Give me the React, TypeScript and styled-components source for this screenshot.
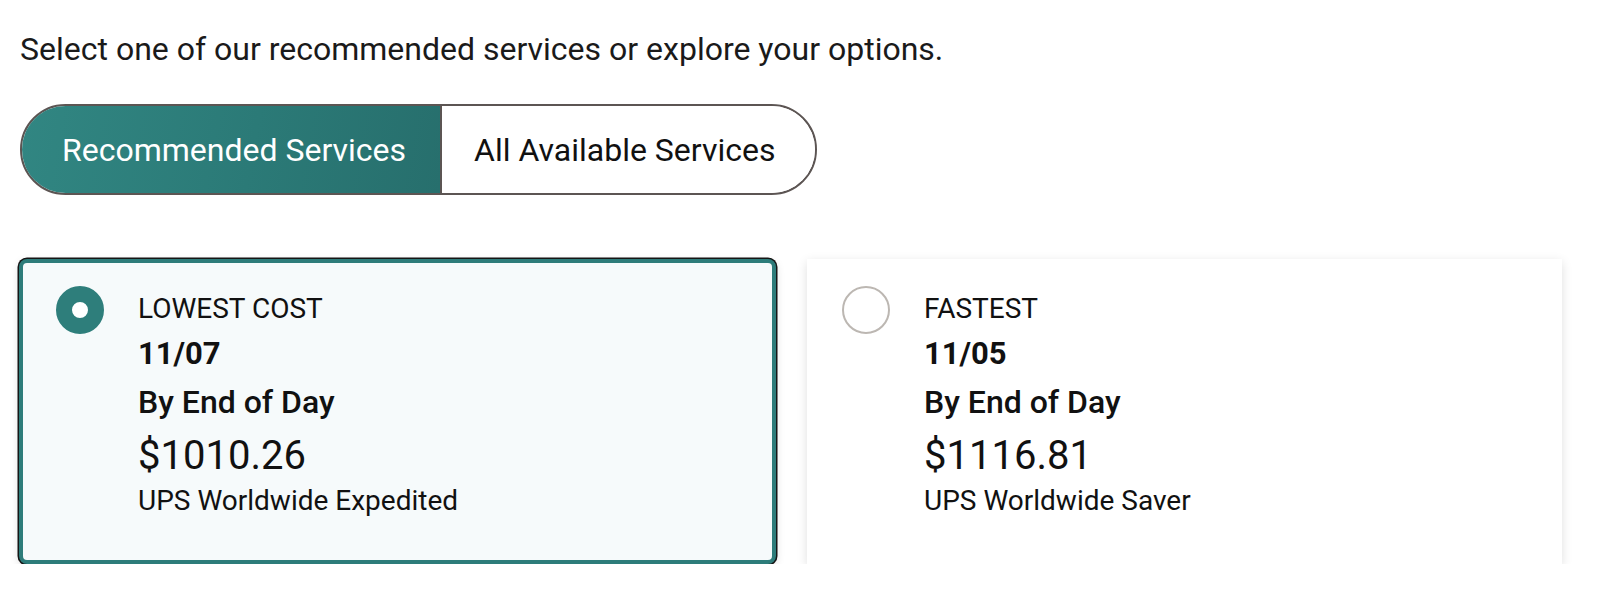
import styled, { createGlobalStyle } from 'styled-components';

const GlobalStyle = createGlobalStyle`
  body {
    margin: 0;
    background: #ffffff;
    font-family: Roboto, 'Liberation Sans', sans-serif;
    color: #111111;
  }
`;

const Page = styled.div`
  padding: 28px 0 0 20px;
`;

const Intro = styled.p`
  margin: 0;
  font-size: 32px;
  line-height: 42px;
  color: #1a1a1a;
`;

const Toggle = styled.div`
  display: inline-flex;
  margin-top: 34px;
  height: 91px;
  box-sizing: border-box;
  border: 2px solid #5c5553;
  border-radius: 46px;
  overflow: hidden;
`;

const ToggleButton = styled.button<{ $active?: boolean }>`
  font-family: Roboto, 'Liberation Sans', sans-serif;
  font-size: 32px;
  border: none;
  margin: 0;
  padding: ${p => (p.$active ? '0 34px 0 40px' : '0 40px 0 32px')};
  color: ${p => (p.$active ? '#ffffff' : '#111111')};
  background: ${p => (p.$active ? 'linear-gradient(100deg, #318682 0%, #2b7a77 55%, #276f6d 100%)' : '#ffffff')};
  border-right: ${p => (p.$active ? '2px solid #5c5553' : 'none')};
  cursor: pointer;
`;

const Cards = styled.div`
  display: grid;
  grid-template-columns: 757px 755px;
  gap: 31px;
  margin-top: 64px;
  margin-left: -1px;
`;

const Card = styled.label<{ $selected?: boolean }>`
  display: flex;
  gap: 34px;
  height: 305px;
  box-sizing: border-box;
  padding: 23px 0 0 ${p => (p.$selected ? '33px' : '31px')};
  border: 4px solid ${p => (p.$selected ? '#2d7c7a' : 'transparent')};
  border-radius: ${p => (p.$selected ? '8px' : '0')};
  background: ${p => (p.$selected ? '#f6fafb' : '#ffffff')};
  box-shadow: ${p =>
    p.$selected
      ? '0 0 0 1.5px #151515, 0 3px 10px rgba(0,0,0,0.14)'
      : '0 3px 10px rgba(0,0,0,0.13)'};
`;

const Radio = styled.span<{ $checked?: boolean }>`
  flex: none;
  width: 48px;
  height: 48px;
  box-sizing: border-box;
  border-radius: 50%;
  border: ${p => (p.$checked ? '16px solid #2e7e7b' : '2px solid #bcb7b2')};
  background: #ffffff;
`;

const Info = styled.div`
  display: flex;
  flex-direction: column;
`;

const Label = styled.div`
  font-size: 28px;
  line-height: 46px;
`;

const DateLine = styled.div`
  font-size: 31px;
  font-weight: 700;
  line-height: 44px;
`;

const Delivery = styled.div`
  font-size: 32px;
  font-weight: 500;
  line-height: 52px;
`;

const Price = styled.div`
  font-size: 40px;
  line-height: 56px;
`;

const Service = styled.div`
  font-size: 28px;
  line-height: 34px;
`;

const options = [
  { label: 'LOWEST COST', date: '11/07', time: 'By End of Day', price: '$1010.26', service: 'UPS Worldwide Expedited', selected: true },
  { label: 'FASTEST', date: '11/05', time: 'By End of Day', price: '$1116.81', service: 'UPS Worldwide Saver', selected: false },
];

export default function App() {
  return (
    <>
      <GlobalStyle />
      <Page>
        <Intro>Select one of our recommended services or explore your options.</Intro>
        <Toggle>
          <ToggleButton $active>Recommended Services</ToggleButton>
          <ToggleButton>All Available Services</ToggleButton>
        </Toggle>
        <Cards>
          {options.map(o => (
            <Card key={o.label} $selected={o.selected}>
              <Radio $checked={o.selected} />
              <Info>
                <Label>{o.label}</Label>
                <DateLine>{o.date}</DateLine>
                <Delivery>{o.time}</Delivery>
                <Price>{o.price}</Price>
                <Service>{o.service}</Service>
              </Info>
            </Card>
          ))}
        </Cards>
      </Page>
    </>
  );
}
